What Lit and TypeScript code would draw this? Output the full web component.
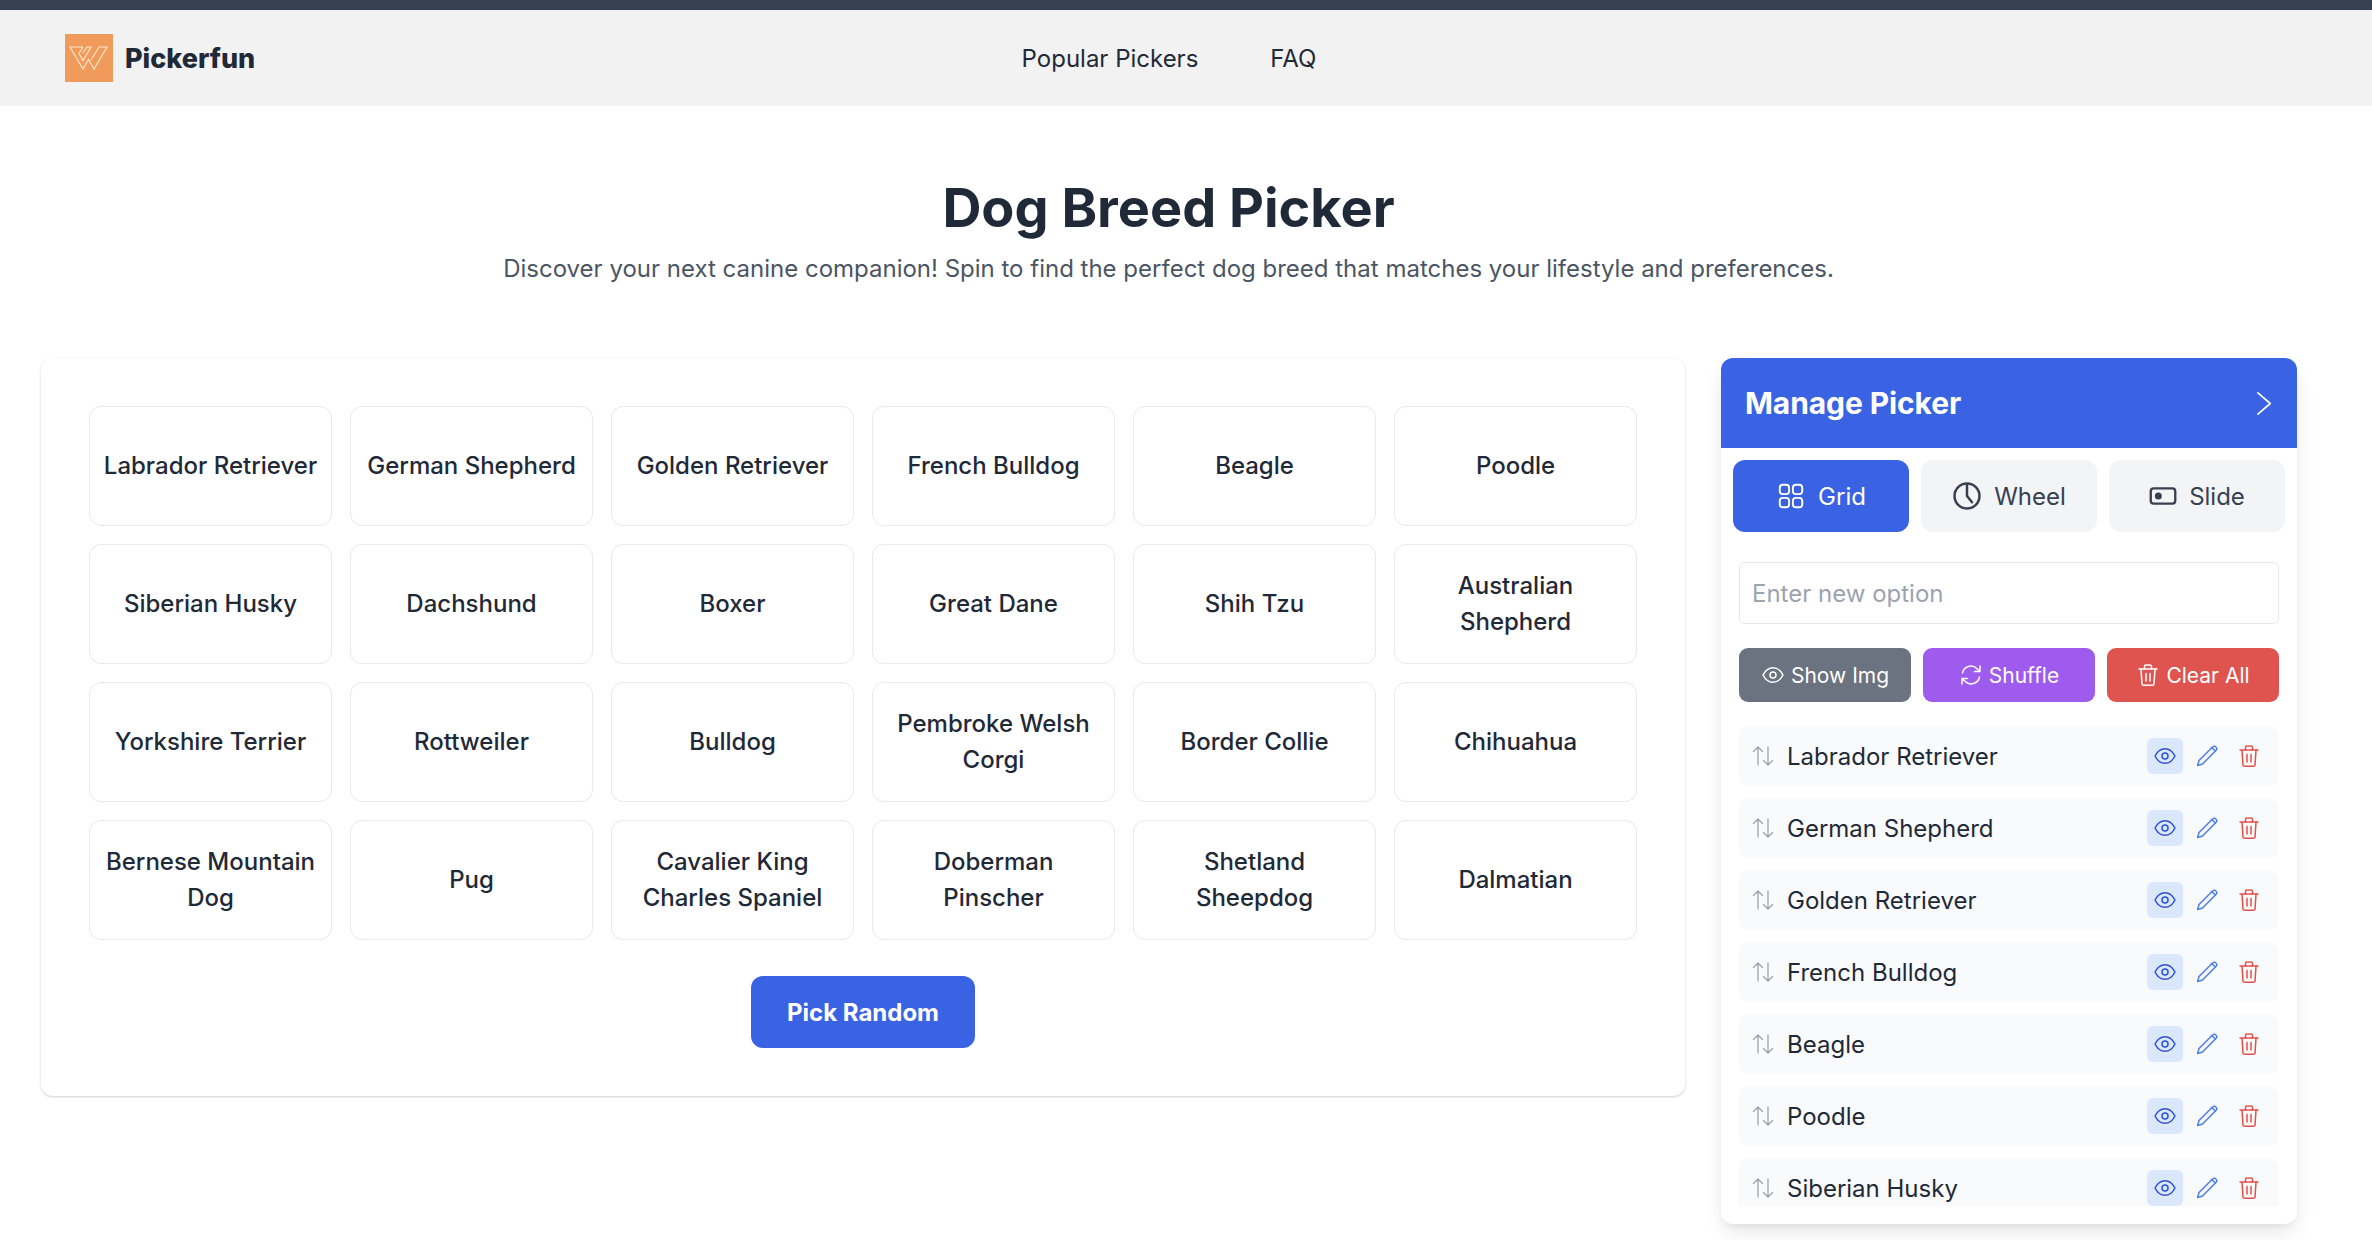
import { LitElement, html, css, svg } from "lit";
import { customElement } from "lit/decorators.js";

const BREEDS = [
  "Labrador Retriever",
  "German Shepherd",
  "Golden Retriever",
  "French Bulldog",
  "Beagle",
  "Poodle",
  "Siberian Husky",
  "Dachshund",
  "Boxer",
  "Great Dane",
  "Shih Tzu",
  "Australian Shepherd",
  "Yorkshire Terrier",
  "Rottweiler",
  "Bulldog",
  "Pembroke Welsh Corgi",
  "Border Collie",
  "Chihuahua",
  "Bernese Mountain Dog",
  "Pug",
  "Cavalier King Charles Spaniel",
  "Doberman Pinscher",
  "Shetland Sheepdog",
  "Dalmatian",
];

const icon = (body: unknown, size = 24, width = 1.5) => html`<svg
  width=${size}
  height=${size}
  viewBox="0 0 24 24"
  fill="none"
  stroke="currentColor"
  stroke-width=${width}
  stroke-linecap="round"
  stroke-linejoin="round"
>
  ${body}
</svg>`;

const EYE = svg`<path d="M2 12C4.500 7 8 4.700 12 4.700S19.500 7 22 12C19.500 17 16 19.300 12 19.300S4.500 17 2 12Z"/><circle cx="12" cy="12" r="3"/>`;
const PENCIL = svg`<path d="M2.500 21.500l1.500-5L17.800 2.800a2 2 0 0 1 2.900 0l.5.500a2 2 0 0 1 0 2.900L7.500 20l-5 1.500Z"/><path d="M17 3.600l3.400 3.400"/>`;
const TRASH = svg`<path d="M3 6h18"/><path d="M5 6l1 15a1.500 1.500 0 0 0 1.500 1.300h9A1.500 1.500 0 0 0 18 21l1-15"/><path d="M8.500 6V3.500A1.500 1.500 0 0 1 10 2h4a1.500 1.500 0 0 1 1.500 1.500V6"/><path d="M10 10.500v7.500M14 10.500v7.500"/>`;
const ARROWS = svg`<path d="M7 21V3M2.500 7.500L7 3l4.500 4.500"/><path d="M17 3v18M12.500 16.500L17 21l4.500-4.500"/>`;
const REFRESH = svg`<path d="M3.500 10A8.500 8.500 0 0 1 18 5.800L21 8.500M21 3v5.500h-5.500"/><path d="M20.500 14A8.500 8.500 0 0 1 6 18.200L3 15.500M3 21v-5.500h5.500"/>`;
const GRID = svg`<rect x="3" y="3" width="7.500" height="7.500" rx="2.500"/><rect x="13.500" y="3" width="7.500" height="7.500" rx="2.500"/><rect x="3" y="13.500" width="7.500" height="7.500" rx="2.500"/><rect x="13.500" y="13.500" width="7.500" height="7.500" rx="2.500"/>`;
const CLOCK = svg`<circle cx="12" cy="12" r="10"/><path d="M12 2.500V12l4 5"/>`;
const SLIDE = svg`<rect x="1.500" y="5.500" width="21" height="13" rx="2.500"/><circle cx="8" cy="12" r="2" fill="currentColor"/>`;
const CHEVRON = svg`<path d="M7 2.500l11 9.500-11 9.500"/>`;

@customElement("app-root")
export class AppRoot extends LitElement {
  static styles = css`
    :host {
      display: block;
      height: 1240px;
      overflow: hidden;
      background: #fff;
      font-family: Inter, "Liberation Sans", sans-serif;
      color: #1f2937;
    }
    * {
      box-sizing: border-box;
    }
    svg {
      display: block;
      flex: none;
    }
    .topbar {
      height: 10px;
      background: #374151;
    }
    .nav {
      height: 96px;
      background: #f2f2f2;
      display: grid;
      grid-template-columns: 1fr auto 1fr;
      align-items: center;
      padding: 0 99px 0 65px;
    }
    .brand {
      display: flex;
      align-items: center;
      gap: 12px;
      font-size: 27px;
      font-weight: 800;
    }
    .links {
      display: flex;
      gap: 72px;
      font-size: 24px;
      font-weight: 400;
      color: #1f2937;
    }
    .hero {
      width: 2337px;
      text-align: center;
      padding-top: 69px;
    }
    h1 {
      margin: 0;
      font-size: 54px;
      line-height: 66px;
      font-weight: 700;
    }
    .hero p {
      margin: 10px 0 0;
      font-size: 24px;
      line-height: 36px;
      color: #4b5563;
    }
    .content {
      display: flex;
      align-items: flex-start;
      gap: 36px;
      padding: 71px 0 0 41px;
    }
    .board {
      width: 1644px;
      height: 738px;
      padding: 48px;
      background: #fff;
      border-radius: 12px;
      box-shadow: 0 1px 3px rgba(0, 0, 0, 0.14), 0 1px 2px rgba(0, 0, 0, 0.06);
      display: flex;
      flex-direction: column;
      align-items: center;
      flex: none;
    }
    .cells {
      display: grid;
      grid-template-columns: repeat(6, 243px);
      grid-auto-rows: 120px;
      gap: 18px;
    }
    .cell {
      border: 1.5px solid #e8e9ec;
      border-radius: 12px;
      display: flex;
      align-items: center;
      justify-content: center;
      text-align: center;
      padding: 0 12px;
      font-size: 24px;
      line-height: 36px;
      font-weight: 500;
    }
    .pick {
      margin-top: 36px;
      width: 224px;
      height: 72px;
      border-radius: 12px;
      background: #3a63e3;
      color: #fff;
      display: flex;
      align-items: center;
      justify-content: center;
      font-size: 24px;
      font-weight: 700;
    }
    .panel {
      width: 576px;
      height: 866px;
      flex: none;
      background: #fff;
      border-radius: 12px;
      box-shadow: 0 10px 22px -3px rgba(0, 0, 0, 0.1), 0 4px 9px -4px rgba(0, 0, 0, 0.1);
      display: flex;
      flex-direction: column;
    }
    .panel-head {
      height: 90px;
      background: #3a63e3;
      color: #fff;
      border-radius: 12px 12px 0 0;
      display: flex;
      align-items: center;
      justify-content: space-between;
      padding: 0 20px 0 24px;
      font-size: 30px;
      font-weight: 700;
      letter-spacing: -0.1px;
      flex: none;
    }
    .tabs {
      display: grid;
      grid-template-columns: repeat(3, 1fr);
      gap: 12px;
      padding: 12px 12px 0;
    }
    .tab {
      height: 72px;
      border-radius: 12px;
      background: #f3f4f6;
      color: #374151;
      display: flex;
      align-items: center;
      justify-content: center;
      gap: 12px;
      font-size: 24px;
    }
    .tab.active {
      background: #3a63e3;
      color: #fff;
    }
    .body {
      padding: 30px 18px 0;
      min-height: 0;
      display: flex;
      flex-direction: column;
    }
    .field {
      height: 62px;
      border: 1.5px solid #e5e7eb;
      border-radius: 6px;
      display: flex;
      align-items: center;
      padding: 0 12px;
      font-size: 24px;
      color: #9ca3af;
    }
    .actions {
      display: grid;
      grid-template-columns: repeat(3, 1fr);
      gap: 12px;
      margin-top: 24px;
    }
    .action {
      height: 54px;
      border-radius: 9px;
      color: #fff;
      display: flex;
      align-items: center;
      justify-content: center;
      gap: 6px;
      font-size: 21px;
    }
    .gray {
      background: #6b7280;
    }
    .purple {
      background: #9f5aee;
    }
    .red {
      background: #e0544f;
    }
    .list {
      margin-top: 24px;
      height: 480px;
      overflow: hidden;
      display: flex;
      flex-direction: column;
      gap: 12px;
    }
    .item {
      flex: none;
      height: 60px;
      border-radius: 9px;
      background: #f9fafb;
      display: flex;
      align-items: center;
      gap: 6px;
      padding: 0 12px;
      font-size: 24px;
    }
    .item .drag {
      color: #9ca3af;
      margin-right: 6px;
    }
    .item .name {
      flex: 1;
    }
    .btn {
      width: 36px;
      height: 36px;
      border-radius: 6px;
      display: flex;
      align-items: center;
      justify-content: center;
    }
    .btn.view {
      background: #dbe7fb;
      color: #2f52cf;
    }
    .btn.edit {
      color: #4f7dea;
    }
    .btn.del {
      color: #e2504c;
    }
  `;

  render() {
    return html`
      <div class="topbar"></div>
      <header class="nav">
        <div class="brand">
          <svg width="48" height="48" viewBox="0 0 48 48">
            <rect width="48" height="48" fill="#f09a5c" />
            <path
              d="M18 13H5l13 22 5.500-9.500L29 35l13-22h-8l-8 13M18 13l-4 6.500 4 7L26 13h-4l-4 6"
              fill="none"
              stroke="#fde6c4"
              stroke-width="1.200"
            />
          </svg>
          Pickerfun
        </div>
        <nav class="links"><span>Popular Pickers</span><span>FAQ</span></nav>
        <div></div>
      </header>
      <section class="hero">
        <h1>Dog Breed Picker</h1>
        <p>
          Discover your next canine companion! Spin to find the perfect dog
          breed that matches your lifestyle and preferences.
        </p>
      </section>
      <main class="content">
        <div class="board">
          <div class="cells">
            ${BREEDS.map((b) => html`<div class="cell">${b}</div>`)}
          </div>
          <div class="pick">Pick Random</div>
        </div>
        <aside class="panel">
          <div class="panel-head">Manage Picker ${icon(CHEVRON, 27, 1.5)}</div>
          <div class="tabs">
            <div class="tab active">${icon(GRID, 30, 1.5)} Grid</div>
            <div class="tab">${icon(CLOCK, 30, 2)} Wheel</div>
            <div class="tab">${icon(SLIDE, 28, 2)} Slide</div>
          </div>
          <div class="body">
            <div class="field">Enter new option</div>
            <div class="actions">
              <div class="action gray">${icon(EYE, 24)} Show Img</div>
              <div class="action purple">${icon(REFRESH, 24)} Shuffle</div>
              <div class="action red">${icon(TRASH, 24)} Clear All</div>
            </div>
            <div class="list">
              ${BREEDS.slice(0, 7).map(
                (b) => html`<div class="item">
                  <span class="drag">${icon(ARROWS, 24, 1.3)}</span>
                  <span class="name">${b}</span>
                  <span class="btn view">${icon(EYE, 24)}</span>
                  <span class="btn edit">${icon(PENCIL, 24)}</span>
                  <span class="btn del">${icon(TRASH, 24)}</span>
                </div>`
              )}
            </div>
          </div>
        </aside>
      </main>
    `;
  }
}
